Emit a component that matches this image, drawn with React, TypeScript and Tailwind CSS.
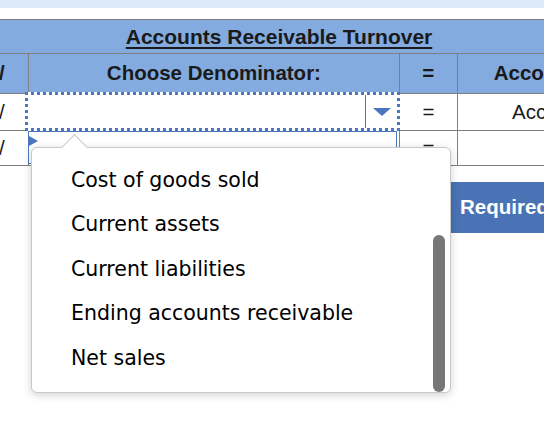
import React from 'react';

const options = [
  'Cost of goods sold',
  'Current assets',
  'Current liabilities',
  'Ending accounts receivable',
  'Net sales',
];

const App = () => {
  return (
    <div className="relative w-[544px] h-[422px] overflow-hidden bg-white font-['Liberation_Sans',Arial,sans-serif] text-[#1a1a1a]">
      <div className="h-[8px] bg-[#dce9f8]" />

      <div className="mt-[11px] w-[700px] border-t border-[#7f7f7f]">
        {/* title */}
        <div className="h-[34px] bg-[#83abdf] border-b border-[#7f7f7f] flex items-center">
          <div className="w-[558px] text-center text-[21px] font-bold underline underline-offset-[3px] decoration-[1.5px]">
            Accounts Receivable Turnover
          </div>
        </div>

        {/* header */}
        <div className="h-[40px] bg-[#83abdf] border-b border-[#7f7f7f] flex text-[20.5px] font-bold">
          <div className="w-[30px] border-r border-[#7f7f7f] flex items-center -ml-[1px]">/</div>
          <div className="w-[371px] border-r border-[#7f7f7f] flex items-center justify-center">Choose Denominator:</div>
          <div className="w-[58px] border-r border-[#7f7f7f] flex items-center justify-center">=</div>
          <div className="flex-1 flex items-center pl-[36px] whitespace-nowrap">Accounts Receivable</div>
        </div>

        {/* row 1 */}
        <div className="h-[37px] border-b border-[#7f7f7f] flex text-[20.5px]">
          <div className="w-[30px] border-r border-[#7f7f7f] flex items-center -ml-[1px]">/</div>
          <div className="w-[371px] border-r border-[#7f7f7f] relative">
            <div className="absolute left-[-4px] top-[-2px] w-[375px] h-[39px] bg-white border-[3px] border-dotted border-[#4a78c0] flex justify-end">
              <div className="w-[32px] my-[0px] border-l border-[#4a78c0] flex items-center justify-center">
                <svg width="18" height="8" viewBox="0 0 18 8">
                  <path d="M0 0 L18 0 L9 8 Z" fill="#4a76bd" />
                </svg>
              </div>
            </div>
          </div>
          <div className="w-[58px] border-r border-[#7f7f7f] flex items-center justify-center">=</div>
          <div className="flex-1 flex items-center pl-[54px] whitespace-nowrap">Accounts</div>
        </div>

        {/* row 2 */}
        <div className="h-[35px] border-b border-[#7f7f7f] flex text-[20.5px]">
          <div className="w-[30px] border-r border-[#7f7f7f] flex items-center -ml-[1px]">/</div>
          <div className="w-[371px] border-r border-[#7f7f7f] relative">
            <div className="absolute left-[-1px] top-0 w-[369px] h-[33px] border border-[#4a78c0] bg-white" />
            <svg className="absolute left-[0px] top-[5px]" width="9" height="10" viewBox="0 0 9 10">
              <path d="M0 0 L9 5 L0 10 Z" fill="#4a76bd" />
            </svg>
          </div>
          <div className="w-[58px] border-r border-[#7f7f7f] flex items-center justify-center">=</div>
          <div className="flex-1" />
        </div>
      </div>

      <div className="mt-[16px] pl-[451px]">
        <button className="h-[51px] w-[140px] bg-[#4a73b5] text-white text-[20.5px] font-bold text-left pl-[9px]">
          Required
        </button>
      </div>

      {/* dropdown popup */}
      <div className="absolute left-[31px] top-[147px] w-[420px] h-[246px] rounded-[6px] border border-[#c9c9c9] bg-white shadow-[0_2px_8px_rgba(0,0,0,0.18)] font-['DejaVu_Sans',Verdana,sans-serif] text-[20.5px] text-black">
        <div className="absolute left-[33px] top-[-10px] w-[19px] h-[19px] rotate-45 bg-white border-l border-t border-[#c9c9c9]" />
        <div className="relative pt-[10px] pl-[39px]">
          {options.map((o) => (
            <div key={o} className="h-[44.5px] flex items-center whitespace-nowrap">
              {o}
            </div>
          ))}
        </div>
        <div className="absolute right-[5px] top-[87px] w-[12px] h-[157px] rounded-full bg-[#777777]" />
      </div>
    </div>
  );
};

export default App;
